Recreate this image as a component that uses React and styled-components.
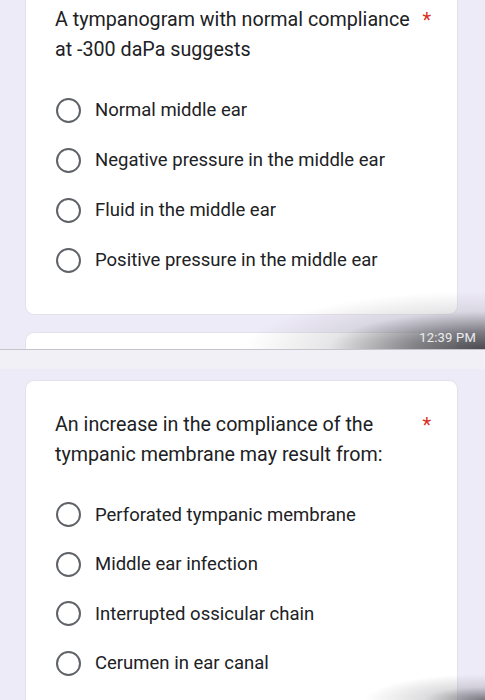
import React from "react";
import styled, { createGlobalStyle } from "styled-components";

const GlobalStyle = createGlobalStyle`
  html, body {
    margin: 0;
    padding: 0;
    background: #eeebf8;
    font-family: Roboto, "Noto Sans", Arial, sans-serif;
  }
`;

const Page = styled.div`
  width: 485px;
  height: 700px;
  overflow: hidden;
  position: relative;
  background: #eeebf8;
`;

const Shot = styled.div`
  position: relative;
  height: ${(p) => p.height}px;
  overflow: hidden;
  background: ${(p) => p.bg || "#eeebf8"};
  padding: ${(p) => p.pad || "0"};
  box-sizing: border-box;
  border-bottom: ${(p) => (p.divider ? "1px solid #c6c5cb" : "none")};
`;

const Card = styled.div`
  width: 433px;
  margin-left: 25px;
  box-sizing: border-box;
  background: #fff;
  border: 1px solid #e3e1ea;
  border-radius: ${(p) => (p.flatTop ? "0 0 9px 9px" : "9px")};
  border-top: ${(p) => (p.flatTop ? "none" : "1px solid #e3e1ea")};
  padding: ${(p) => p.pad};
  margin-bottom: ${(p) => p.gap || 0}px;
`;

const Stub = styled(Card)`
  height: 40px;
`;

const Header = styled.div`
  display: flex;
  align-items: flex-start;
  padding-right: 26px;
`;

const Title = styled.div`
  flex: 1;
  font-size: 19.7px;
  line-height: 30px;
  color: #202124;
`;

const Required = styled.span`
  color: #d93025;
  font-size: 20px;
  line-height: 30px;
  margin-left: 6px;
`;

const Options = styled.div`
  margin-top: 20px;
  display: flex;
  flex-direction: column;
`;

const Option = styled.div`
  height: ${(p) => p.h}px;
  display: flex;
  align-items: center;
  gap: 14px;
  padding-left: 1px;
`;

const Radio = styled.span`
  width: 25px;
  height: 25px;
  box-sizing: border-box;
  border: 2.6px solid #5f6368;
  border-radius: 50%;
  flex-shrink: 0;
`;

const Label = styled.span`
  font-size: 18.5px;
  color: #202124;
`;

const TimeShade = styled.div`
  position: absolute;
  right: 0;
  bottom: 0;
  width: 240px;
  height: 58px;
  background: radial-gradient(
    ellipse 240px 58px at 100% 100%,
    rgba(70, 70, 76, 0.98) 0%,
    rgba(90, 90, 96, 0.75) 30%,
    rgba(170, 170, 176, 0.3) 65%,
    rgba(255, 255, 255, 0) 100%
  );
  display: flex;
  align-items: flex-end;
  justify-content: flex-end;
  padding: 0 9px 3px 0;
  box-sizing: border-box;
`;

const Time = styled.span`
  color: #ececef;
  font-size: 13px;
  line-height: 16px;
  letter-spacing: 0.2px;
`;

const CornerShade = styled.div`
  position: absolute;
  right: 0;
  bottom: 0;
  width: 120px;
  height: 26px;
  background: radial-gradient(
    ellipse 120px 26px at 100% 100%,
    rgba(80, 80, 86, 0.75) 0%,
    rgba(140, 140, 146, 0.3) 50%,
    rgba(255, 255, 255, 0) 100%
  );
`;

const Question = ({ title, options, pad, rowH, flatTop, gap }) => (
  <Card pad={pad} flatTop={flatTop} gap={gap}>
    <Header>
      <Title>{title}</Title>
      <Required>*</Required>
    </Header>
    <Options>
      {options.map((o) => (
        <Option key={o} h={rowH}>
          <Radio />
          <Label>{o}</Label>
        </Option>
      ))}
    </Options>
  </Card>
);

const first = [
  "Normal middle ear",
  "Negative pressure in the middle ear",
  "Fluid in the middle ear",
  "Positive pressure in the middle ear",
];

const second = [
  "Perforated tympanic membrane",
  "Middle ear infection",
  "Interrupted ossicular chain",
  "Cerumen in ear canal",
];

const App = () => {
  return (
    <Page>
      <GlobalStyle />
      <Shot height={350} divider>
        <Question
          title="A tympanogram with normal compliance at -300 daPa suggests"
          options={first}
          pad="5px 0 29px 29px"
          rowH={50}
          flatTop
          gap={17}
        />
        <Stub pad="0" />
        <TimeShade>
          <Time>12:39 PM</Time>
        </TimeShade>
      </Shot>
      <Shot
        height={350}
        bg="linear-gradient(#f1f0f6 0, #f1f0f6 19px, #eeebf8 19px)"
        pad="30px 0 0"
      >
        <Question
          title="An increase in the compliance of the tympanic membrane may result from:"
          options={second}
          pad="29px 0 40px 29px"
          rowH={49.5}
        />
        <CornerShade />
      </Shot>
    </Page>
  );
};

export default App;
